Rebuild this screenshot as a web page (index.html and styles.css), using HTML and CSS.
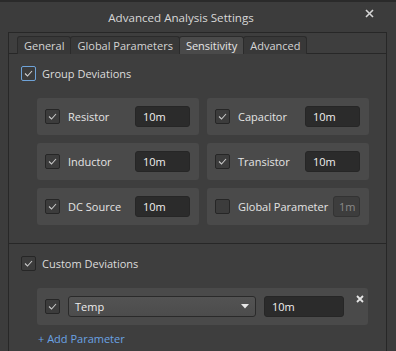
FILE: index.html
```html
<!DOCTYPE html>
<html>
<head>
<meta charset="utf-8">
<link rel="stylesheet" href="styles.css">
</head>
<body>
<div class="window">
  <div class="titlebar">
    <span class="title">Advanced Analysis Settings</span>
    <span class="close"><svg width="9" height="9" viewBox="0 0 9 9"><path d="M1 1 L8 8 M8 1 L1 8" stroke="#d6d6d6" stroke-width="1.6" fill="none"/></svg></span>
  </div>
  <div class="frame">
    <div class="tabs">
      <div class="tab">General</div>
      <div class="tab">Global Parameters</div>
      <div class="tab active">Sensitivity</div>
      <div class="tab">Advanced</div>
    </div>
    <div class="panel">
      <div class="section">
        <label class="check-row">
          <span class="cb checked focus"><svg width="9" height="7" viewBox="0 0 9 7"><path d="M1 3.5 L3.5 6 L8 1" stroke="#d0d0d0" stroke-width="1.1" fill="none"/></svg></span>
          <span class="section-label">Group Deviations</span>
        </label>
        <div class="grid">
          <div class="card">
            <span class="cb checked"><svg width="9" height="7" viewBox="0 0 9 7"><path d="M1 3.5 L3.5 6 L8 1" stroke="#c8c8c8" stroke-width="1.1" fill="none"/></svg></span>
            <span class="label">Resistor</span>
            <span class="input">10m</span>
          </div>
          <div class="card">
            <span class="cb checked"><svg width="9" height="7" viewBox="0 0 9 7"><path d="M1 3.5 L3.5 6 L8 1" stroke="#c8c8c8" stroke-width="1.1" fill="none"/></svg></span>
            <span class="label">Capacitor</span>
            <span class="input">10m</span>
          </div>
          <div class="card">
            <span class="cb checked"><svg width="9" height="7" viewBox="0 0 9 7"><path d="M1 3.5 L3.5 6 L8 1" stroke="#c8c8c8" stroke-width="1.1" fill="none"/></svg></span>
            <span class="label">Inductor</span>
            <span class="input">10m</span>
          </div>
          <div class="card">
            <span class="cb checked"><svg width="9" height="7" viewBox="0 0 9 7"><path d="M1 3.5 L3.5 6 L8 1" stroke="#c8c8c8" stroke-width="1.1" fill="none"/></svg></span>
            <span class="label">Transistor</span>
            <span class="input">10m</span>
          </div>
          <div class="card">
            <span class="cb checked"><svg width="9" height="7" viewBox="0 0 9 7"><path d="M1 3.5 L3.5 6 L8 1" stroke="#c8c8c8" stroke-width="1.1" fill="none"/></svg></span>
            <span class="label">DC Source</span>
            <span class="input">10m</span>
          </div>
          <div class="card">
            <span class="cb"></span>
            <span class="label">Global Parameter</span>
            <span class="input small disabled">1m</span>
          </div>
        </div>
      </div>
      <div class="section second">
        <label class="check-row">
          <span class="cb checked"><svg width="9" height="7" viewBox="0 0 9 7"><path d="M1 3.5 L3.5 6 L8 1" stroke="#c8c8c8" stroke-width="1.1" fill="none"/></svg></span>
          <span class="section-label">Custom Deviations</span>
        </label>
        <div class="custom-card">
          <span class="cb checked"><svg width="9" height="7" viewBox="0 0 9 7"><path d="M1 3.5 L3.5 6 L8 1" stroke="#c8c8c8" stroke-width="1.1" fill="none"/></svg></span>
          <div class="select">
            <span>Temp</span>
            <svg width="8" height="5" viewBox="0 0 8 5"><path d="M0 0 L8 0 L4 4.5 Z" fill="#e8e8e8"/></svg>
          </div>
          <span class="input wide">10m</span>
          <span class="remove"><svg width="8" height="8" viewBox="0 0 8 8"><path d="M1 1 L7 7 M7 1 L1 7" stroke="#e6e6e6" stroke-width="1.8" fill="none"/></svg></span>
        </div>
        <div class="add">+ Add Parameter</div>
      </div>
    </div>
  </div>
</div>
</body>
</html>
```

FILE: styles.css
```css
html, body {
  margin: 0;
  padding: 0;
}
body {
  width: 396px;
  height: 351px;
  overflow: hidden;
  background: #3c3c3c;
  font-family: "Open Sans", "Noto Sans", sans-serif;
  font-size: 11px;
  color: #e2e2e2;
}
.window {
  border-top: 2px solid #2a2a2a;
}
.titlebar {
  height: 30px;
  display: flex;
  align-items: center;
}
.title {
  width: 362px;
  text-align: center;
  font-size: 11.6px;
  color: #d8d8d8;
}
.close {
  margin-left: 3px;
  margin-top: -8px;
  display: flex;
}
.frame {
  margin: 0 9px 0 8px;
  border: 1px solid #272727;
  border-bottom: none;
  background: #3e3e3e;
  height: 330px;
}
.tabs {
  display: flex;
  padding: 3px 0 0 8px;
  height: 17px;
  border-bottom: 1px solid #272727;
}
.tab {
  height: 17px;
  line-height: 17px;
  padding: 0 6px;
  border: 1px solid #2b2b2b;
  border-bottom: none;
  border-radius: 3px 3px 0 0;
  background: #383838;
  color: #d4d4d4;
  margin-right: -1px;
}
.tab.active {
  background: #4a4a4a;
  color: #e6e6e6;
}
.section {
  padding: 12px 0 18px 12px;
  border-bottom: 1px solid #272727;
}
.section.second {
  border-bottom: none;
  padding-bottom: 0;
}
.check-row {
  display: flex;
  align-items: center;
  height: 15px;
}
.section-label {
  margin-left: 6px;
  color: #dcdcdc;
}
.cb {
  width: 13px;
  height: 13px;
  border: 1px solid #262626;
  border-radius: 2px;
  background: #3c3c3c;
  display: flex;
  align-items: center;
  justify-content: center;
  flex: none;
}
.cb.focus {
  border-color: #6fa3d8;
  background: #3b3b3b;
}
.grid {
  margin: 17px 0 0 16px;
  display: grid;
  grid-template-columns: 162px 162px;
  column-gap: 8px;
  row-gap: 8px;
}
.card {
  height: 37px;
  background: #4a4a4a;
  border-radius: 3px;
  display: flex;
  align-items: center;
  padding: 0 9px 0 8px;
}
.label {
  margin-left: 8px;
  flex: 1;
  color: #e4e4e4;
  white-space: nowrap;
}
.input {
  width: 46px;
  height: 19px;
  line-height: 19px;
  padding-left: 7px;
  background: #2b2b2b;
  border: 1px solid #262626;
  border-radius: 3px;
  color: #f0f0f0;
  flex: none;
}
.input.small {
  width: 20px;
  padding-left: 5px;
}
.input.disabled {
  background: #3d3d3d;
  color: #8a8a8a;
  border-color: #333333;
}
.custom-card {
  box-sizing: border-box;
  width: 331px;
  margin: 17px 0 0 16px;
  height: 37px;
  background: #4a4a4a;
  border-radius: 3px;
  display: flex;
  align-items: center;
  padding: 0 4px 0 8px;
}
.select {
  box-sizing: border-box;
  margin-left: 8px;
  width: 188px;
  height: 21px;
  padding: 0 6px 0 6px;
  border: 1px solid #2a2a2a;
  border-radius: 3px;
  background: linear-gradient(#535353, #4c4c4c);
  display: flex;
  align-items: center;
  justify-content: space-between;
  color: #ececec;
}
.input.wide {
  margin-left: 8px;
  width: 71px;
}
.remove {
  margin-left: 12px;
  align-self: flex-start;
  margin-top: 7px;
  display: flex;
}
.add {
  margin: 6px 0 0 17px;
  color: #6aa3e4;
}
```
